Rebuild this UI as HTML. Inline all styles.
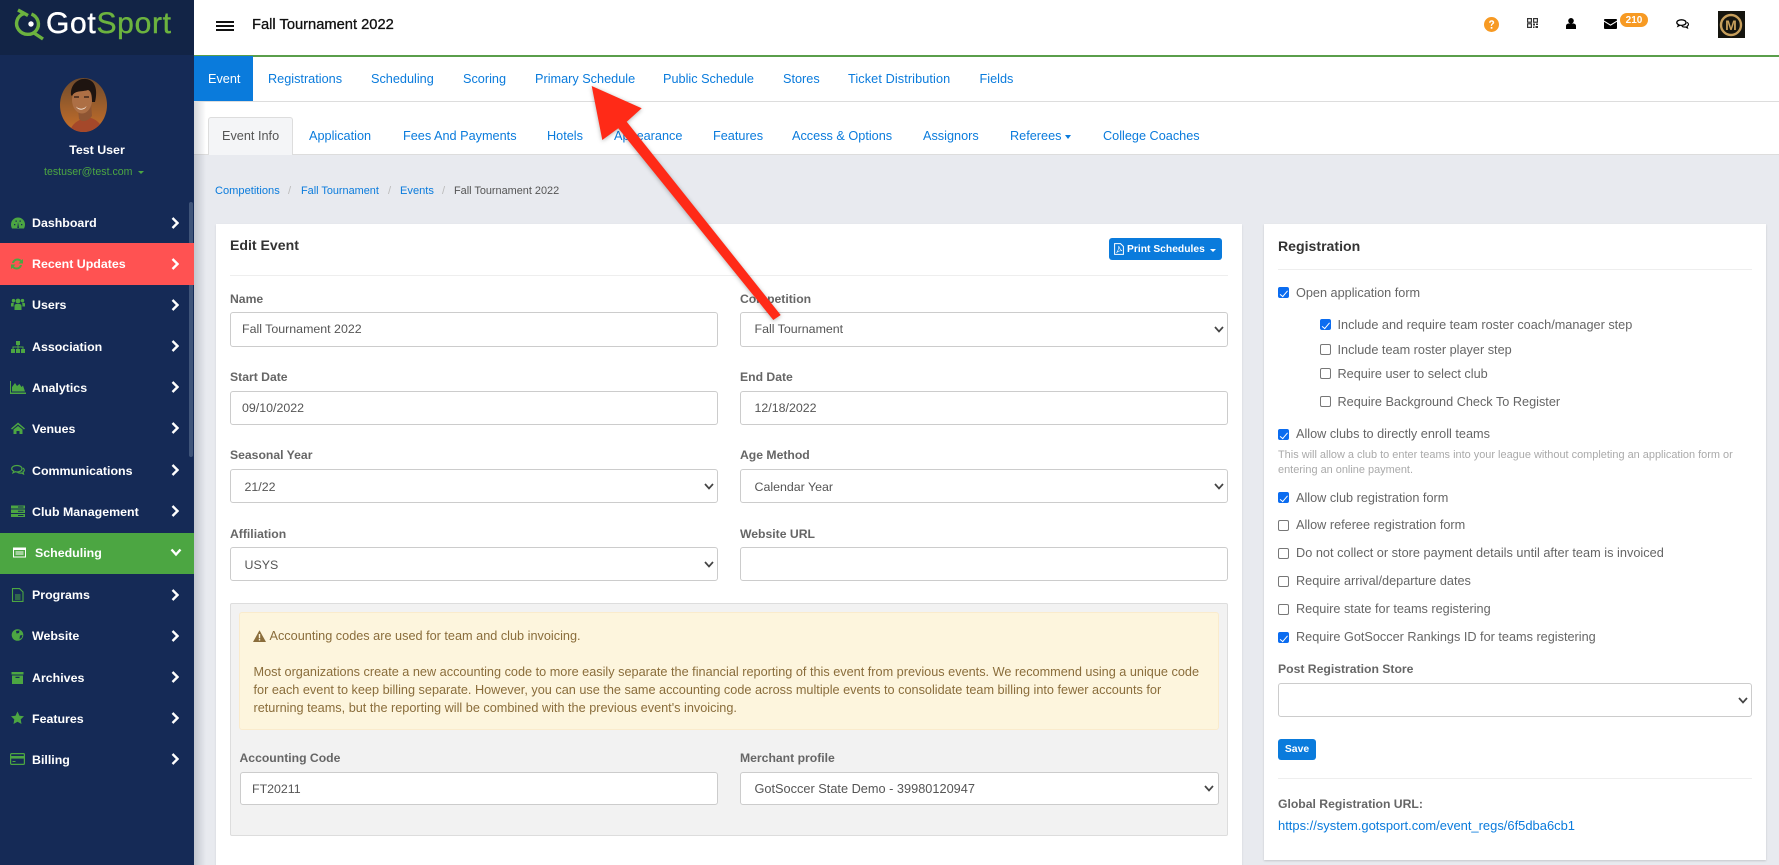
<!DOCTYPE html>
<html><head><meta charset="utf-8"><title>Fall Tournament 2022</title>
<style>
*{box-sizing:border-box}
html,body{margin:0;padding:0;width:1779px;height:865px;overflow:hidden;background:#e8eaef;font-family:"Liberation Sans",Arial,sans-serif;color:#666}
#p{position:relative;width:1779px;height:865px;overflow:hidden}
.a{position:absolute}
.t{position:absolute;white-space:nowrap;line-height:20px;height:20px}
.n{font-size:12.7px;color:#0a7bdc}
.b{font-size:11.1px;color:#0a7bdc}
.l{font-size:12.2px;font-weight:bold;color:#666}
.s{font-size:12.4px;font-weight:bold;color:#fff;left:32px}
.v{font-size:12.4px;color:#555}
.c{font-size:12.7px;color:#666}
.f{position:absolute;background:#fff;border:1px solid #ccc;border-radius:3px}
.w{position:absolute;color:#8a6d3b;font-size:12.7px;white-space:nowrap;line-height:18px;height:18px;left:253.5px}
.x{position:absolute;width:11px;height:11px;border-radius:2px;background:#fff;border:1px solid #777}
.x.on{background:#0b6cf0;border-color:#0b6cf0}
.x.on:after{content:"";position:absolute;left:3px;top:0.5px;width:3px;height:6.5px;border:solid #fff;border-width:0 1.6px 1.6px 0;transform:rotate(40deg)}
.i{position:absolute;left:11px;width:14px;height:14px;fill:#4ca642}
.ch{position:absolute;left:171px;width:8px;height:12px;fill:none;stroke:#fff;stroke-width:2.4}
.sa{position:absolute;width:10px;height:7px;fill:none;stroke:#444;stroke-width:1.7}
</style></head><body><div id="p">

<!-- top bar -->
<div class="a" style="left:194px;top:0;width:1585px;height:55px;background:#fff"></div>
<div class="a" style="left:194px;top:55px;width:1585px;height:1.5px;background:#5a9e4b"></div>
<div class="a" style="left:216px;top:20.5px;width:18px;height:2px;background:#111"></div>
<div class="a" style="left:216px;top:24.7px;width:18px;height:2px;background:#111"></div>
<div class="a" style="left:216px;top:28.9px;width:18px;height:2px;background:#111"></div>
<span class="t" style="left:252px;top:15px;font-size:14.7px;color:#111;-webkit-text-stroke:.3px #111">Fall Tournament 2022</span>

<!-- top icons -->
<svg class="a" style="left:1484px;top:17px" width="15" height="15" viewBox="0 0 15 15"><circle cx="7.5" cy="7.5" r="7.5" fill="#f79a23"/><path d="M5 5.6C5.2 4 6.2 3.2 7.6 3.2 9.2 3.2 10.2 4.2 10.2 5.4 10.2 7.2 8 7.2 8 8.9H6.8C6.8 6.6 8.6 6.6 8.6 5.5 8.6 5 8.2 4.6 7.6 4.6 7 4.6 6.6 5 6.4 5.9Z" fill="#fff"/><rect x="6.7" y="10" width="1.7" height="1.7" fill="#fff"/></svg>
<svg class="a" style="left:1527px;top:18px" width="11" height="10" viewBox="0 0 11 10"><g fill="none" stroke="#333" stroke-width="1.2"><rect x=".6" y=".6" width="3.8" height="3.6"/><rect x="6.6" y=".6" width="3.8" height="3.6"/><rect x=".6" y="5.8" width="3.8" height="3.6"/></g><path d="M6 5.5h2v2H6zM9 5.5h2v1.500H9zM6 8.500h1.500V10H6zM8.500 8h2.500v2H8.500z" fill="#333"/></svg>
<svg class="a" style="left:1566px;top:18px" width="10" height="11" viewBox="0 0 10 11"><circle cx="5" cy="2.800" r="2.800" fill="#000"/><path d="M0 11V8C0 6.200 1.500 5.500 3 5.500H7C8.500 5.500 10 6.200 10 8V11Z" fill="#000"/></svg>
<svg class="a" style="left:1604px;top:19px" width="13" height="10" viewBox="0 0 13 10"><path d="M0 1C0 .4.400 0 1 0H12C12.600 0 13 .4 13 1V1.500L6.500 5.500 0 1.500ZM0 2.800L6.500 6.800 13 2.800V9C13 9.600 12.600 10 12 10H1C.4 10 0 9.600 0 9Z" fill="#000"/></svg>
<div class="a" style="left:1620px;top:13px;width:28px;height:14px;border-radius:7px;background:#f79a23;color:#fff;font-size:10px;font-weight:bold;line-height:15px;text-align:center">210</div>
<svg class="a" style="left:1676px;top:19px" width="13" height="10" viewBox="0 0 13 10"><path d="M5.500 .8C8 .8 10 2 10 3.600S8 6.400 5.500 6.400C5 6.400 4.500 6.400 4 6.200L2 7.200 2.600 5.700C1.500 5.200 .8 4.500 .8 3.600.8 2 3 .8 5.500 .8Z" fill="#fff" stroke="#000" stroke-width="1.300"/><path d="M11 3.300C12.200 4 12.700 5 12.300 6 12 6.700 11.500 7 11 7.300L11.500 9 9.500 8C8 8.200 6.500 7.800 5.800 7.200" fill="none" stroke="#000" stroke-width="1.100"/></svg>
<div class="a" style="left:1718px;top:11px;width:27px;height:27px;background:#15150f;overflow:hidden"><svg width="27" height="27" style="position:absolute;left:0;top:0"><circle cx="13" cy="14" r="10" fill="none" stroke="#c79f5c" stroke-width="2.400"/></svg><span style="position:absolute;left:0;top:1px;width:26px;text-align:center;font:bold 14px/27px 'Liberation Sans',sans-serif;color:#c79f5c">M</span></div>

<!-- nav tabs -->
<div class="a" style="left:194px;top:56.500px;width:1585px;height:45.500px;background:#fff;border-bottom:1px solid #ddd"></div>
<div class="a" style="left:194px;top:56px;width:59px;height:45px;background:#0a7bdc"></div>
<span class="t n" style="left:208px;top:69px;color:#fff">Event</span>
<span class="t n" style="left:268px;top:69px">Registrations</span>
<span class="t n" style="left:371px;top:69px">Scheduling</span>
<span class="t n" style="left:463px;top:69px">Scoring</span>
<span class="t n" style="left:535px;top:69px">Primary Schedule</span>
<span class="t n" style="left:663px;top:69px">Public Schedule</span>
<span class="t n" style="left:783px;top:69px">Stores</span>
<span class="t n" style="left:848px;top:69px;letter-spacing:.1px">Ticket Distribution</span>
<span class="t n" style="left:979.500px;top:69px">Fields</span>

<!-- sub tabs -->
<div class="a" style="left:194px;top:102px;width:1585px;height:53px;background:#fff;border-bottom:1px solid #ddd"></div>
<div class="a" style="left:208px;top:117px;width:85px;height:38px;background:#f4f5f7;border:1px solid #ddd;border-bottom:0;border-radius:3px 3px 0 0"></div>
<span class="t n" style="left:222px;top:126px;color:#555">Event Info</span>
<span class="t n" style="left:309px;top:126px">Application</span>
<span class="t n" style="left:403px;top:126px">Fees And Payments</span>
<span class="t n" style="left:547px;top:126px">Hotels</span>
<span class="t n" style="left:614px;top:126px">Appearance</span>
<span class="t n" style="left:713px;top:126px">Features</span>
<span class="t n" style="left:792px;top:126px">Access &amp; Options</span>
<span class="t n" style="left:923px;top:126px">Assignors</span>
<span class="t n" style="left:1010px;top:126px">Referees</span>
<div class="a" style="left:1065px;top:134.500px;border:3.500px solid transparent;border-top:4px solid #0a7bdc;border-bottom:0"></div>
<span class="t n" style="left:1103px;top:126px">College Coaches</span>

<!-- breadcrumb -->
<span class="t b" style="left:215px;top:181px">Competitions</span>
<span class="t b" style="left:288px;top:181px;color:#bbb">/</span>
<span class="t b" style="left:301px;top:181px;font-size:10.900px">Fall Tournament</span>
<span class="t b" style="left:388px;top:181px;color:#bbb">/</span>
<span class="t b" style="left:400px;top:181px">Events</span>
<span class="t b" style="left:442px;top:181px;color:#bbb">/</span>
<span class="t b" style="left:454px;top:181px;color:#555;font-size:10.900px">Fall Tournament 2022</span>

<!-- edit panel -->
<div class="a" style="left:216px;top:224px;width:1026px;height:660px;background:#fff;box-shadow:0 1px 2px rgba(0,0,0,.1)"></div>
<span class="t" style="left:230px;top:235px;font-size:14.100px;font-weight:bold;color:#333">Edit Event</span>
<div class="a" style="left:230px;top:275px;width:998px;height:1px;background:#eee"></div>
<div class="a" style="left:1109px;top:238px;width:113px;height:22px;background:#0a7bdc;border-radius:3px"></div>
<svg class="a" style="left:1114px;top:243px" width="10" height="12" viewBox="0 0 10 12"><path d="M.6.6H6.500L9.400 3.500V11.400H.6Z" fill="none" stroke="#fff" stroke-width="1"/><path d="M2.500 9.800C4 8 5 5 4.700 3 5.600 5.500 6.500 7 8 7.800 6.200 7.600 4 8.300 2.500 9.800Z" fill="none" stroke="#fff" stroke-width=".6"/></svg>
<span class="t" style="left:1127px;top:240px;font-size:10.300px;font-weight:bold;color:#fff">Print Schedules</span>
<div class="a" style="left:1210px;top:249px;border:3px solid transparent;border-top:3px solid #fff;border-bottom:0"></div>

<span class="t l" style="left:230px;top:289px">Name</span>
<span class="t l" style="left:740px;top:289px">Competition</span>
<div class="f" style="left:230px;top:312px;width:488px;height:35px"></div>
<span class="t v" style="left:242px;top:319px">Fall Tournament 2022</span>
<div class="f" style="left:740px;top:312px;width:488px;height:35px"></div>
<span class="t v" style="left:754.500px;top:319px">Fall Tournament</span>
<svg class="sa" style="left:1214px;top:326px" viewBox="0 0 10 7"><polyline points="1,1 5,5.500 9,1"/></svg>

<span class="t l" style="left:230px;top:367px">Start Date</span>
<span class="t l" style="left:740px;top:367px">End Date</span>
<div class="f" style="left:230px;top:391px;width:488px;height:34px"></div>
<span class="t v" style="left:242px;top:398px">09/10/2022</span>
<div class="f" style="left:740px;top:391px;width:488px;height:34px"></div>
<span class="t v" style="left:754.500px;top:398px">12/18/2022</span>

<span class="t l" style="left:230px;top:445px">Seasonal Year</span>
<span class="t l" style="left:740px;top:445px">Age Method</span>
<div class="f" style="left:230px;top:469px;width:488px;height:34px"></div>
<span class="t v" style="left:244.500px;top:476.500px">21/22</span>
<svg class="sa" style="left:704px;top:483px" viewBox="0 0 10 7"><polyline points="1,1 5,5.500 9,1"/></svg>
<div class="f" style="left:740px;top:469px;width:488px;height:34px"></div>
<span class="t v" style="left:754.500px;top:476.500px">Calendar Year</span>
<svg class="sa" style="left:1214px;top:483px" viewBox="0 0 10 7"><polyline points="1,1 5,5.500 9,1"/></svg>

<span class="t l" style="left:230px;top:523.500px">Affiliation</span>
<span class="t l" style="left:740px;top:523.500px">Website URL</span>
<div class="f" style="left:230px;top:547px;width:488px;height:34px"></div>
<span class="t v" style="left:244.500px;top:554.500px">USYS</span>
<svg class="sa" style="left:704px;top:561px" viewBox="0 0 10 7"><polyline points="1,1 5,5.500 9,1"/></svg>
<div class="f" style="left:740px;top:547px;width:488px;height:34px"></div>

<!-- accounting box -->
<div class="a" style="left:230px;top:603px;width:998px;height:233px;background:#f2f2f2;border:1px solid #ddd;border-radius:2px"></div>
<div class="a" style="left:239px;top:612px;width:980px;height:118px;background:#fdf5dd;border:1px solid #faebcc;border-radius:3px"></div>
<svg class="a" style="left:253px;top:630px" width="13" height="12" viewBox="0 0 13 12"><path d="M6.500.3L13 12H0Z" fill="#8a6d3b"/><rect x="5.800" y="4" width="1.400" height="4.300" fill="#fdf5dd"/><rect x="5.800" y="9" width="1.400" height="1.500" fill="#fdf5dd"/></svg>
<span class="w" style="left:269.500px;top:627px">Accounting codes are used for team and club invoicing.</span>
<span class="w" style="top:663px">Most organizations create a new accounting code to more easily separate the financial reporting of this event from previous events. We recommend using a unique code</span>
<span class="w" style="top:681px">for each event to keep billing separate. However, you can use the same accounting code across multiple events to consolidate team billing into fewer accounts for</span>
<span class="w" style="top:699px">returning teams, but the reporting will be combined with the previous event's invoicing.</span>

<span class="t l" style="left:239.500px;top:747.500px">Accounting Code</span>
<span class="t l" style="left:740px;top:747.500px">Merchant profile</span>
<div class="f" style="left:239.500px;top:772px;width:478.500px;height:33px"></div>
<span class="t v" style="left:252px;top:778.500px">FT20211</span>
<div class="f" style="left:740px;top:772px;width:479px;height:33px"></div>
<span class="t v" style="left:754.500px;top:778.500px;font-size:12.750px">GotSoccer State Demo - 39980120947</span>
<svg class="sa" style="left:1204px;top:785px" viewBox="0 0 10 7"><polyline points="1,1 5,5.500 9,1"/></svg>

<!-- registration panel -->
<div class="a" style="left:1264px;top:224px;width:502px;height:636px;background:#fff;box-shadow:0 1px 2px rgba(0,0,0,.15)"></div>
<span class="t" style="left:1278px;top:236px;font-size:14.100px;font-weight:bold;color:#333">Registration</span>
<div class="a" style="left:1278px;top:269px;width:474px;height:1px;background:#eee"></div>

<i class="x on" style="left:1278px;top:287px"></i><span class="t c" style="left:1296px;top:283px">Open application form</span>
<i class="x on" style="left:1320px;top:319px"></i><span class="t c" style="left:1337.500px;top:314.500px">Include and require team roster coach/manager step</span>
<i class="x" style="left:1320px;top:344px"></i><span class="t c" style="left:1337.500px;top:339.500px">Include team roster player step</span>
<i class="x" style="left:1320px;top:368px"></i><span class="t c" style="left:1337.500px;top:363.500px">Require user to select club</span>
<i class="x" style="left:1320px;top:396px"></i><span class="t c" style="left:1337.500px;top:391.500px">Require Background Check To Register</span>
<i class="x on" style="left:1278px;top:429px"></i><span class="t c" style="left:1296px;top:423.500px">Allow clubs to directly enroll teams</span>
<span class="t" style="left:1278px;top:445px;font-size:10.950px;color:#aaa">This will allow a club to enter teams into your league without completing an application form or</span>
<span class="t" style="left:1278px;top:460px;font-size:10.950px;color:#aaa">entering an online payment.</span>
<i class="x on" style="left:1278px;top:492px"></i><span class="t c" style="left:1296px;top:487.500px">Allow club registration form</span>
<i class="x" style="left:1278px;top:520px"></i><span class="t c" style="left:1296px;top:514.500px">Allow referee registration form</span>
<i class="x" style="left:1278px;top:548px"></i><span class="t c" style="left:1296px;top:542.500px;font-size:12.750px">Do not collect or store payment details until after team is invoiced</span>
<i class="x" style="left:1278px;top:576px"></i><span class="t c" style="left:1296px;top:570.500px">Require arrival/departure dates</span>
<i class="x" style="left:1278px;top:604px"></i><span class="t c" style="left:1296px;top:598.500px">Require state for teams registering</span>
<i class="x on" style="left:1278px;top:632px"></i><span class="t c" style="left:1296px;top:626.500px">Require GotSoccer Rankings ID for teams registering</span>

<span class="t l" style="left:1278px;top:659px">Post Registration Store</span>
<div class="f" style="left:1278px;top:683px;width:474px;height:34px"></div>
<svg class="sa" style="left:1738px;top:697px" viewBox="0 0 10 7"><polyline points="1,1 5,5.500 9,1"/></svg>
<div class="a" style="left:1278px;top:739px;width:38px;height:21px;background:#0a7bdc;border-radius:3px;color:#fff;font-size:10.400px;font-weight:bold;line-height:22px;text-align:center">Save</div>
<div class="a" style="left:1278px;top:778px;width:474px;height:1px;background:#eee"></div>
<span class="t l" style="left:1278px;top:793.500px">Global Registration URL:</span>
<span class="t" style="left:1278px;top:815.500px;font-size:12.950px;color:#0a7bdc">https://system.gotsport.com/event_regs/6f5dba6cb1</span>

<!-- sidebar -->
<div class="a" style="left:194px;top:102px;width:12px;height:763px;background:linear-gradient(90deg,rgba(60,70,90,.22),rgba(60,70,90,0))"></div>
<div class="a" style="left:0;top:0;width:194px;height:865px;background:#152a56"></div>
<div class="a" style="left:0;top:0;width:194px;height:55px;background:#122446"></div>
<div class="a" style="left:189px;top:202px;width:4px;height:255px;background:#3f5479;border-radius:2px"></div>
<div class="a" style="left:0;top:243px;width:194px;height:42px;background:#ff5252"></div>
<div class="a" style="left:0;top:533px;width:194px;height:41px;background:#4ca642"></div>

<!-- logo -->
<svg class="a" style="left:1px;top:0" width="50" height="50" viewBox="0 0 50 50"><path d="M19.500 17A11 10.500 0 1 0 27 14.500" fill="none" stroke="#6cb33f" stroke-width="3.400" transform="rotate(20 30 24)"/><path d="M17 10L27 15.500M33 33L42 39" stroke="#6cb33f" stroke-width="3.400" fill="none"/><circle cx="30" cy="24" r="2.700" fill="#fff"/></svg>
<span class="t" style="left:46px;top:5.800px;height:36px;line-height:36px;font-size:30px;color:#fff;letter-spacing:.7px;-webkit-text-stroke:.4px #fff">Got<span style="color:#6cb33f;-webkit-text-stroke:.4px #6cb33f">Sport</span></span>

<!-- avatar -->
<svg class="a" style="left:60px;top:78px" width="47" height="54" viewBox="0 0 47 54"><defs><clipPath id="av"><ellipse cx="23.500" cy="27" rx="23.500" ry="27"/></clipPath><linearGradient id="ag" x1="0" y1="0" x2="0" y2="1"><stop offset="0" stop-color="#6e4a2c"/><stop offset="1" stop-color="#c8702a"/></linearGradient></defs><g clip-path="url(#av)"><rect width="47" height="54" fill="url(#ag)"/><path d="M10 54C11 46 18 42 27 39 34 40 41 44 44 54Z" fill="#a5482a"/><path d="M18 30L19 41C23 45 28 43 32 38L31 24Z" fill="#8e5533"/><ellipse cx="22" cy="22" rx="10" ry="13.500" fill="#ad6f45"/><path d="M11 17C10 7 18 0 26 1 35 2 38 11 35 24L32 24C32 16 31 13 28 12 22 14 15 12 12 18Z" fill="#1e1410"/><path d="M16 28.500C19 31.500 24 31.500 26.500 28 25 32.500 18 33 16 28.500Z" fill="#f4e6da"/><path d="M14 19h5M24 19h5" stroke="#2a1810" stroke-width="1.200"/></g></svg>
<span class="t" style="left:0;width:194px;text-align:center;top:140px;font-size:12.400px;font-weight:bold;color:#fff">Test User</span>
<span class="t" style="left:44px;top:162px;font-size:10.600px;color:#4ca642">testuser@test.com</span>
<div class="a" style="left:138px;top:171px;border:3px solid transparent;border-top:3px solid #4ca642;border-bottom:0"></div>

<!-- sidebar items -->
<svg class="i" style="top:216px" viewBox="0 0 14 14"><path d="M7 1.500C3 1.500 0 4.700 0 8.500 0 10 .4 11.300 1 12.500H13C13.600 11.300 14 10 14 8.500 14 4.700 11 1.500 7 1.500Z"/><path d="M6.300 12L7 6 8 12ZM3 8h1.300v1.300H3ZM10 8h1.300v1.300H10ZM4.500 4.500h1.300v1.300H4.500ZM8.500 4.500h1.300v1.300H8.500Z" fill="#152a56"/></svg>
<span class="t s" style="top:212.500px">Dashboard</span>
<svg class="i" style="left:10px;top:257px" viewBox="0 0 14 14"><path d="M2 6C2.600 3 5 1.500 7.500 1.500 9.300 1.500 10.600 2.300 11.500 3.200L13 2V6.500H8.500L10.200 4.800C9.500 4 8.500 3.500 7.300 3.500 5.700 3.500 4.500 4.500 4 6ZM12 8C11.400 11 9 12.500 6.500 12.500 4.700 12.500 3.400 11.700 2.500 10.800L1 12V7.500H5.500L3.800 9.200C4.500 10 5.500 10.500 6.700 10.500 8.300 10.500 9.500 9.500 10 8Z"/></svg>
<span class="t s" style="top:253.500px">Recent Updates</span>
<svg class="i" style="top:297px" viewBox="0 0 14 14"><circle cx="7" cy="4" r="2.400"/><circle cx="2.500" cy="3.600" r="1.700"/><circle cx="11.500" cy="3.600" r="1.700"/><path d="M3.500 13V9C3.500 7.500 4.500 7 5.500 7H8.500C9.500 7 10.500 7.500 10.500 9V13ZM0 9.500V7C0 6 .7 5.700 1.500 5.700H3C2.600 6.500 2.600 7.500 2.600 9.500ZM14 9.500V7C14 6 13.300 5.700 12.500 5.700H11C11.400 6.500 11.400 7.500 11.400 9.500Z"/></svg>
<span class="t s" style="top:294.500px">Users</span>
<svg class="i" style="top:340px" viewBox="0 0 14 14"><path d="M5 1H9V5H7.500V6.500H12.500V9H14V13H10V9H11.500V7.500H7.500V9H9V13H5V9H6.500V7.500H2.500V9H4V13H0V9H1.500V6.500H6.500V5H5Z"/></svg>
<span class="t s" style="top:336.500px">Association</span>
<svg class="i" style="left:10px;width:16px;top:380px" viewBox="0 0 16 14"><path d="M0 1H1V12.500H16V14H0ZM2 11.500V7L5 3 7 6 9.500 4 11.500 7 13 5.500 15 11.500Z"/></svg>
<span class="t s" style="top:377.500px">Analytics</span>
<svg class="i" style="top:421px" viewBox="0 0 14 14"><path d="M7 1.500L14 7.500 13 8.500 7 3.500 1 8.500 0 7.500ZM2.500 8.500L7 5 11.500 8.500V13H8.500V10H5.500V13H2.500Z"/></svg>
<span class="t s" style="top:418.500px">Venues</span>
<svg class="i" style="top:463px;fill:none;stroke:#4ca642;stroke-width:1.200" viewBox="0 0 14 14"><path d="M6 2.500C8.800 2.500 11 3.800 11 5.700S8.800 9 6 9C5.400 9 4.800 9 4.300 8.700L2 9.800 2.700 8C1.500 7.500.7 6.700.7 5.700.7 3.800 3 2.500 6 2.500Z"/><path d="M12 5C13 5.700 13.500 6.500 13.200 7.700 13 8.300 12.500 8.800 12 9L12.500 11 10.500 10C9 10.300 7.500 10 6.500 9.400"/></svg>
<span class="t s" style="top:460.500px">Communications</span>
<svg class="i" style="top:504px" viewBox="0 0 14 14"><path d="M0 1.500H14V4.500H0ZM0 5.500H14V9H0ZM0 10H14V13H0Z"/><path d="M7 2.500H12.500V3.500H7ZM7 6.700H12.500V7.700H7ZM7 11H12.500V12H7Z" fill="#152a56"/></svg>
<span class="t s" style="top:501.500px">Club Management</span>
<svg class="a" style="left:13px;top:546px" width="13" height="13" viewBox="0 0 13 13"><rect x=".5" y="2" width="12" height="9" fill="none" stroke="#fff" stroke-width="1"/><path d="M0 2H13V4H0ZM2.500 5.500H10.500V6.500H2.500ZM2.500 7.500H10.500V8.500H2.500Z" fill="#fff"/></svg>
<span class="t s" style="left:35px;top:542.500px">Scheduling</span>
<svg class="i" style="top:588px;fill:none;stroke:#4ca642;stroke-width:1.100;left:10.500px" viewBox="0 0 14 14"><path d="M1.500.6H8.500L12 4V13.400H1.500Z"/><path d="M4 7H9.500M4 9H9.500M4 11H9.500"/></svg>
<span class="t s" style="top:584.800px">Programs</span>
<svg class="i" style="top:628px;left:10.500px" viewBox="0 0 14 14"><circle cx="6.500" cy="7" r="5.800"/><path d="M5 3L8.500 2.500 8 5 5.500 5.500ZM9 7.500L11.500 7 10.500 10 8.500 11Z" fill="#152a56"/></svg>
<span class="t s" style="top:625.500px">Website</span>
<svg class="i" style="top:671px;left:10.500px" viewBox="0 0 14 14"><path d="M.5 1H12.500V3.500H.5ZM1 4.500H12V13H1Z"/><path d="M4.500 5.800H8.500V7H4.500Z" fill="#152a56"/></svg>
<span class="t s" style="top:667.800px">Archives</span>
<svg class="i" style="top:711px;left:10.500px" viewBox="0 0 14 14"><path d="M6.500.5L8.500 4.700 13 5.300 9.700 8.400 10.500 13 6.500 10.700 2.500 13 3.300 8.400 0 5.300 4.500 4.700Z"/></svg>
<span class="t s" style="top:708.900px">Features</span>
<svg class="i" style="top:752px;left:10px;width:15px" viewBox="0 0 15 14"><rect x=".6" y="1.600" width="13.800" height="10.800" rx="1" fill="none" stroke="#4ca642" stroke-width="1.200"/><rect x="1" y="4" width="13" height="2.600"/><rect x="2.500" y="9" width="3" height="1"/></svg>
<span class="t s" style="top:749.500px">Billing</span>

<svg class="ch" style="top:216.500px" viewBox="0 0 8 12"><polyline points="1.500,1 6.500,6 1.500,11"/></svg>
<svg class="ch" style="top:257.500px" viewBox="0 0 8 12"><polyline points="1.500,1 6.500,6 1.500,11"/></svg>
<svg class="ch" style="top:298.500px" viewBox="0 0 8 12"><polyline points="1.500,1 6.500,6 1.500,11"/></svg>
<svg class="ch" style="top:340px" viewBox="0 0 8 12"><polyline points="1.500,1 6.500,6 1.500,11"/></svg>
<svg class="ch" style="top:381px" viewBox="0 0 8 12"><polyline points="1.500,1 6.500,6 1.500,11"/></svg>
<svg class="ch" style="top:422px" viewBox="0 0 8 12"><polyline points="1.500,1 6.500,6 1.500,11"/></svg>
<svg class="ch" style="top:464px" viewBox="0 0 8 12"><polyline points="1.500,1 6.500,6 1.500,11"/></svg>
<svg class="ch" style="top:505px" viewBox="0 0 8 12"><polyline points="1.500,1 6.500,6 1.500,11"/></svg>
<svg class="ch" style="left:170px;top:548px;width:12px;height:9px" viewBox="0 0 12 9"><polyline points="1.500,1.500 6,6.500 10.500,1.500"/></svg>
<svg class="ch" style="top:588.500px" viewBox="0 0 8 12"><polyline points="1.500,1 6.500,6 1.500,11"/></svg>
<svg class="ch" style="top:629.500px" viewBox="0 0 8 12"><polyline points="1.500,1 6.500,6 1.500,11"/></svg>
<svg class="ch" style="top:671px" viewBox="0 0 8 12"><polyline points="1.500,1 6.500,6 1.500,11"/></svg>
<svg class="ch" style="top:712px" viewBox="0 0 8 12"><polyline points="1.500,1 6.500,6 1.500,11"/></svg>
<svg class="ch" style="top:753px" viewBox="0 0 8 12"><polyline points="1.500,1 6.500,6 1.500,11"/></svg>

<!-- arrow -->
<svg class="a" style="left:0;top:0;filter:drop-shadow(0 1px 2px rgba(0,0,0,.3))" width="1779" height="865"><polygon points="591.700,86 641.700,108.300 626.700,121.700 780.700,315 773.300,320 618.300,128.300 602.300,140" fill="#ff2a17"/></svg>

</div></body></html>
